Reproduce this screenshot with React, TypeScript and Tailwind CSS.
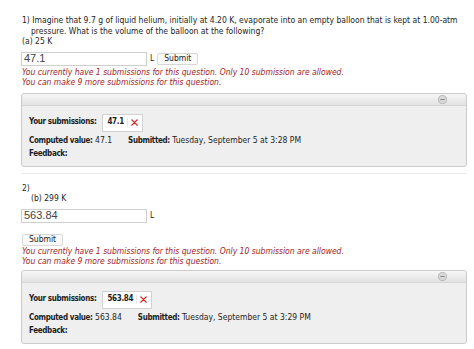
import React from 'react';

const font = "font-['DejaVu_Sans_Condensed','DejaVu_Sans',sans-serif]";
const strong = 'font-bold text-[8px] tracking-[-0.35px]';

function MinusCircle() {
  return (
    <svg width="9" height="9" viewBox="0 0 10 10">
      <circle cx="5" cy="5" r="4.5" fill="#d9d9d9" stroke="#a8a8a8" strokeWidth="0.8" />
      <rect x="2.6" y="4.4" width="4.8" height="1.2" fill="#8a8a8a" />
    </svg>
  );
}

function RedX() {
  return (
    <svg width="7" height="7" viewBox="0 0 8 8">
      <path d="M1 1 L7 7 M7 1 L1 7" stroke="#d42424" strokeWidth="1.6" strokeLinecap="round" />
    </svg>
  );
}

function ResultPanel({ value, time }: { value: string; time: string }) {
  return (
    <div className="ml-[21px] w-[446px] rounded-[3px] border border-[#cbcbcb] bg-[#efefef]">
      <div className="flex h-[12px] items-center justify-end rounded-t-[3px] border-b border-[#d6d6d6] bg-gradient-to-b from-[#f7f7f7] to-[#e2e2e2] pr-[19px]">
        <MinusCircle />
      </div>
      <div className="px-[7px] pb-[6px] pt-[8px]">
        <div className="flex items-center gap-[6px]">
          <span className={strong}>Your submissions:</span>
          <span className="flex h-[18px] items-center gap-[3px] border border-[#d2d2d2] bg-white px-[4px]">
            <span className={strong}>{value}</span>
            <span className="h-[9px] w-px bg-[#e6e6e6]" />
            <RedX />
          </span>
        </div>
        <div className="mt-[3px] flex gap-[16px]">
          <span>
            <span className={strong}>Computed value:</span> {value}
          </span>
          <span>
            <span className={strong}>Submitted:</span> Tuesday, September 5 at {time}
          </span>
        </div>
        <div className={`mt-[3px] ${strong}`}>Feedback:</div>
      </div>
    </div>
  );
}

function Warning() {
  return (
    <div className="italic text-[#a31b24]">
      <div>You currently have 1 submissions for this question. Only 10 submission are allowed.</div>
      <div>You can make 9 more submissions for this question.</div>
    </div>
  );
}

function SubmitButton() {
  return (
    <button className="h-[12px] w-[41px] rounded-[2px] border border-[#d8d8d8] bg-[#fafafa] text-[8.5px] leading-none text-[#222]">
      Submit
    </button>
  );
}

export default function App() {
  return (
    <div className={`h-[349px] w-[474px] overflow-hidden bg-white text-[8.5px] leading-[10.5px] text-[#1e1e1e] ${font}`}>
      <div className="pl-[22px] pt-[15px]">
        <div>1) Imagine that 9.7 g of liquid helium, initially at 4.20 K, evaporate into an empty balloon that is kept at 1.00-atm</div>
        <div className="pl-[9px]">pressure. What is the volume of the balloon at the following?</div>
        <div>(a) 25 K</div>
      </div>

      <div className="mt-[5px] flex items-center pl-[21px]">
        <div className="flex h-[14px] w-[126px] items-center border border-[#cfcfcf] px-[2px] font-['Liberation_Sans',sans-serif] text-[11px] text-[#444]">
          47.1
        </div>
        <span className="ml-[3px] mr-[3px]">L</span>
        <SubmitButton />
      </div>
      <div className="pl-[22px] pt-[1px]">
        <Warning />
      </div>

      <div className="mt-[5px]">
        <ResultPanel value="47.1" time="3:28 PM" />
      </div>
      <div className="ml-[21px] mt-[6px] h-px w-[446px] bg-[#ececec]" />

      <div className="pl-[22px] pt-[9px]">
        <div>2)</div>
        <div className="pl-[9px]">(b) 299 K</div>
      </div>
      <div className="mt-[5px] flex items-center pl-[21px]">
        <div className="flex h-[14px] w-[126px] items-center border border-[#cfcfcf] px-[2px] font-['Liberation_Sans',sans-serif] text-[11px] text-[#444]">
          563.84
        </div>
        <span className="ml-[3px]">L</span>
      </div>
      <div className="mt-[11px] pl-[22px]">
        <SubmitButton />
      </div>
      <div className="pl-[22px]">
        <Warning />
      </div>
      <div className="mt-[3px]">
        <ResultPanel value="563.84" time="3:29 PM" />
      </div>
    </div>
  );
}
